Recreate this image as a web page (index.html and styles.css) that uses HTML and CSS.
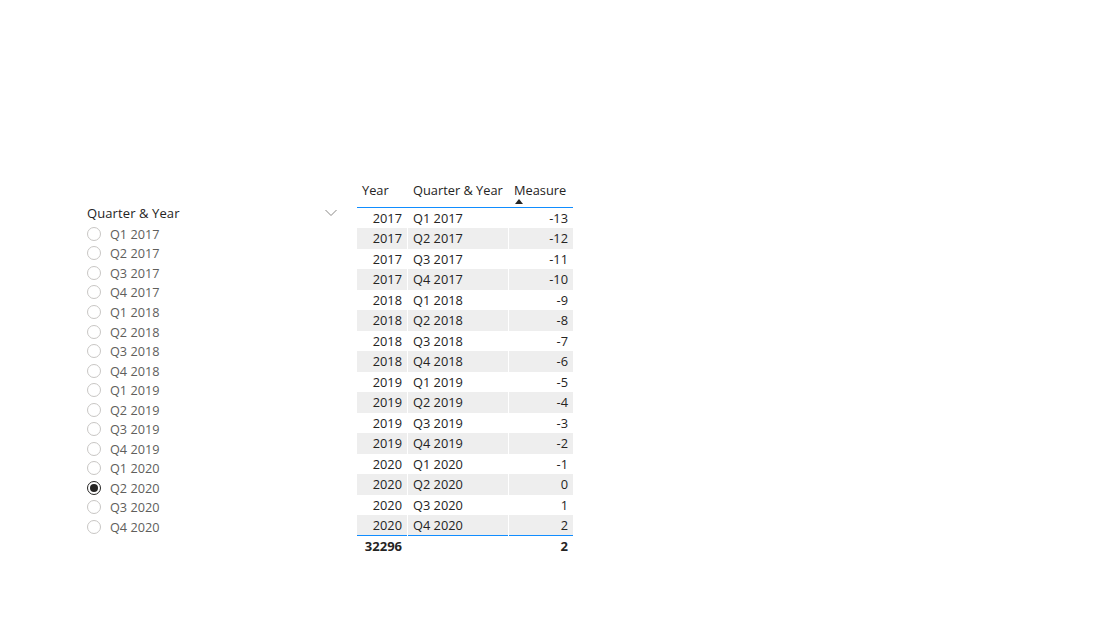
FILE: index.html
```html
<!DOCTYPE html>
<html>
<head>
<meta charset="utf-8">
<link rel="stylesheet" href="styles.css">
</head>
<body>
<div class="canvas">
  <div class="slicer">
    <div class="slicer-head">
      <span class="slicer-title">Quarter &amp; Year</span>
      <svg class="chevron" width="12" height="8" viewBox="0 0 12 8"><path d="M0.5 1 L6 6.5 L11.5 1" fill="none" stroke="#8a8886" stroke-width="1"/></svg>
    </div>
    <ul class="items">
      <li><span class="radio"></span>Q1 2017</li>
      <li><span class="radio"></span>Q2 2017</li>
      <li><span class="radio"></span>Q3 2017</li>
      <li><span class="radio"></span>Q4 2017</li>
      <li><span class="radio"></span>Q1 2018</li>
      <li><span class="radio"></span>Q2 2018</li>
      <li><span class="radio"></span>Q3 2018</li>
      <li><span class="radio"></span>Q4 2018</li>
      <li><span class="radio"></span>Q1 2019</li>
      <li><span class="radio"></span>Q2 2019</li>
      <li><span class="radio"></span>Q3 2019</li>
      <li><span class="radio"></span>Q4 2019</li>
      <li><span class="radio"></span>Q1 2020</li>
      <li><span class="radio checked"></span>Q2 2020</li>
      <li><span class="radio"></span>Q3 2020</li>
      <li><span class="radio"></span>Q4 2020</li>
    </ul>
  </div>
  <table class="grid">
    <thead>
      <tr><th class="c-year">Year</th><th class="c-q">Quarter &amp; Year</th><th class="c-m">Measure<span class="sort"></span></th></tr>
    </thead>
    <tbody>
      <tr><td class="num">2017</td><td>Q1 2017</td><td class="num">-13</td></tr>
      <tr class="alt"><td class="num">2017</td><td>Q2 2017</td><td class="num">-12</td></tr>
      <tr><td class="num">2017</td><td>Q3 2017</td><td class="num">-11</td></tr>
      <tr class="alt"><td class="num">2017</td><td>Q4 2017</td><td class="num">-10</td></tr>
      <tr><td class="num">2018</td><td>Q1 2018</td><td class="num">-9</td></tr>
      <tr class="alt"><td class="num">2018</td><td>Q2 2018</td><td class="num">-8</td></tr>
      <tr><td class="num">2018</td><td>Q3 2018</td><td class="num">-7</td></tr>
      <tr class="alt"><td class="num">2018</td><td>Q4 2018</td><td class="num">-6</td></tr>
      <tr><td class="num">2019</td><td>Q1 2019</td><td class="num">-5</td></tr>
      <tr class="alt"><td class="num">2019</td><td>Q2 2019</td><td class="num">-4</td></tr>
      <tr><td class="num">2019</td><td>Q3 2019</td><td class="num">-3</td></tr>
      <tr class="alt"><td class="num">2019</td><td>Q4 2019</td><td class="num">-2</td></tr>
      <tr><td class="num">2020</td><td>Q1 2020</td><td class="num">-1</td></tr>
      <tr class="alt"><td class="num">2020</td><td>Q2 2020</td><td class="num">0</td></tr>
      <tr><td class="num">2020</td><td>Q3 2020</td><td class="num">1</td></tr>
      <tr class="alt"><td class="num">2020</td><td>Q4 2020</td><td class="num">2</td></tr>
    </tbody>
    <tfoot>
      <tr><td class="num">32296</td><td></td><td class="num">2</td></tr>
    </tfoot>
  </table>
</div>
</body>
</html>
```

FILE: styles.css
```css
html, body {
  margin: 0;
  padding: 0;
  background: #ffffff;
}
body {
  width: 1110px;
  height: 641px;
  overflow: hidden;
  font-family: "Open Sans", "Noto Sans", "Liberation Sans", sans-serif;
}
.canvas {
  display: flex;
  align-items: flex-start;
  padding: 180px 0 0 87px;
  gap: 18px;
}
.slicer {
  width: 252px;
  margin-top: 24px;
}
.slicer-head {
  display: flex;
  align-items: center;
  justify-content: space-between;
  height: 18px;
  padding-right: 2px;
}
.slicer-title {
  font-size: 13px;
  color: #252423;
  letter-spacing: 0.1px;
}
.chevron {
  display: block;
}
.items {
  list-style: none;
  margin: 0;
  padding: 0;
  margin-top: 2px;
}
.items li {
  display: flex;
  align-items: center;
  height: 19.55px;
  font-size: 12.7px;
  color: #605e5c;
}
.radio {
  width: 12px;
  height: 12px;
  border: 1px solid #c8c6c4;
  border-radius: 50%;
  margin-right: 9px;
  box-sizing: content-box;
  position: relative;
}
.radio.checked {
  border-color: #252423;
}
.radio.checked::after {
  content: "";
  position: absolute;
  left: 2px;
  top: 2px;
  width: 8px;
  height: 8px;
  border-radius: 50%;
  background: #252423;
}
.grid {
  border-collapse: collapse;
  font-size: 12.8px;
  color: #252423;
}
.grid th {
  font-weight: normal;
  text-align: left;
  height: 26px;
  line-height: 18px;
  padding: 1px 5px 0;
  vertical-align: top;
  border-bottom: 1px solid #118dff;
  border-right: 1px solid #ffffff;
  position: relative;
  color: #252423;
  white-space: nowrap;
}
.grid th:last-child,
.grid td:last-child {
  border-right: 0;
}
.c-year { width: 40px; }
.c-q { width: 90px; }
.c-m { width: 54px; }
.sort {
  position: absolute;
  left: 6px;
  bottom: 3px;
  width: 0;
  height: 0;
  border-left: 4px solid transparent;
  border-right: 4px solid transparent;
  border-bottom: 5px solid #252423;
}
.grid td {
  height: 20.5px;
  padding: 0 5px;
  border-right: 1px solid #ffffff;
  white-space: nowrap;
  box-sizing: border-box;
  color: #252423;
}
.grid tbody tr.alt td {
  background: #eeeeee;
}
.grid td.num {
  text-align: right;
}
.grid tfoot td {
  border-top: 1px solid #118dff;
  font-weight: bold;
  font-size: 13px;
  height: 20px;
}
```
